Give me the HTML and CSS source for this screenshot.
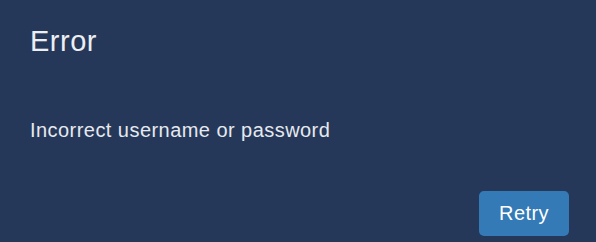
FILE: index.html
```html
<!DOCTYPE html>
<html>
<head>
<meta charset="utf-8">
<link rel="stylesheet" href="styles.css">
</head>
<body>
<div class="dialog">
  <h1 class="title">Error</h1>
  <p class="message">Incorrect username or password</p>
  <div class="actions">
    <button class="btn">Retry</button>
  </div>
</div>
</body>
</html>
```

FILE: styles.css
```css
html, body {
  margin: 0;
  padding: 0;
  background: #253859;
}
.dialog {
  box-sizing: border-box;
  width: 596px;
  height: 242px;
  background: #253859;
  font-family: "Liberation Sans", Arial, sans-serif;
  color: #e6e9ef;
  display: flex;
  flex-direction: column;
  padding: 25px 27px 6px 30px;
}
.title {
  margin: 0;
  font-size: 29px;
  line-height: 33px;
  font-weight: normal;
  color: #eceef3;
  letter-spacing: 0.5px;
}
.message {
  margin: 61px 0 0 0;
  font-size: 20px;
  line-height: 23px;
  letter-spacing: 0.45px;
}
.actions {
  margin-top: auto;
  display: flex;
  justify-content: flex-end;
}
.btn {
  font-family: "Liberation Sans", Arial, sans-serif;
  font-size: 20px;
  line-height: 23px;
  height: 45px;
  width: 90px;
  padding: 0;
  border: none;
  border-radius: 5px;
  background: #337ab7;
  color: #ffffff;
  letter-spacing: 0.4px;
}
```
